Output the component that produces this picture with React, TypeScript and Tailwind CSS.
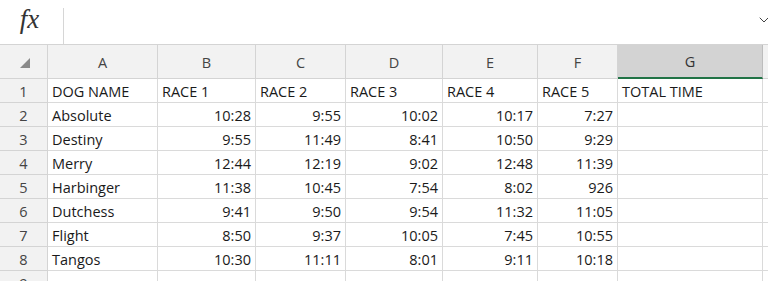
import { ChevronDown } from "lucide-react";

const cols = ["A", "B", "C", "D", "E", "F", "G"];

const rows: [string, string[]][] = [
  ["Absolute", ["10:28", "9:55", "10:02", "10:17", "7:27"]],
  ["Destiny", ["9:55", "11:49", "8:41", "10:50", "9:29"]],
  ["Merry", ["12:44", "12:19", "9:02", "12:48", "11:39"]],
  ["Harbinger", ["11:38", "10:45", "7:54", "8:02", "926"]],
  ["Dutchess", ["9:41", "9:50", "9:54", "11:32", "11:05"]],
  ["Flight", ["8:50", "9:37", "10:05", "7:45", "10:55"]],
  ["Tangos", ["10:30", "11:11", "8:01", "9:11", "10:18"]],
];

const grid =
  "grid grid-cols-[48px_110px_98px_90px_97px_95px_80px_145px_1fr]";

function Cell({ children, right }: { children?: React.ReactNode; right?: boolean }) {
  return (
    <div
      className={`h-6 border-r border-b border-[#dadada] px-1 pt-[3px] flex items-center text-[14.5px] text-[#1a1a1a] overflow-hidden whitespace-nowrap ${
        right ? "justify-end" : ""
      }`}
    >
      {children}
    </div>
  );
}

function RowHead({ n }: { n: number }) {
  return (
    <div className="h-6 border-r border-b border-[#d4d4d4] bg-[#f2f2f2] pt-[3px] flex items-center justify-center text-[14.5px] text-[#444]">
      {n}
    </div>
  );
}

export default function App() {
  return (
    <div
      className="w-[768px] h-[281px] overflow-hidden bg-white"
      style={{ fontFamily: '"Open Sans", "Liberation Sans", sans-serif' }}
    >
      {/* formula bar */}
      <div className="h-[44px] flex items-start">
        <div
          className="w-[63px] h-[38px] flex items-center justify-center text-[27px] italic text-[#333] pr-1"
          style={{ fontFamily: '"Liberation Serif", serif' }}
        >
          fx
        </div>
        <div className="mt-2 w-px h-[36px] bg-[#d6d6d6]" />
        <div className="flex-1" />
        <ChevronDown size={16} strokeWidth={1.5} className="mt-[12px] mr-[-4px] text-[#444]" />
      </div>

      {/* column headers */}
      <div className={`${grid} border-t border-[#d4d4d4]`}>
        <div className="h-[34px] border-r border-b border-[#d4d4d4] bg-[#f2f2f2] relative">
          <svg className="absolute left-[20px] top-[13px]" width="10" height="10" viewBox="0 0 10 10">
            <polygon points="10,0 10,10 0,10" fill="#8a8a8a" />
          </svg>
        </div>
        {cols.map((c) =>
          c === "G" ? (
            <div
              key={c}
              className="h-[34px] border-r border-[#bdbdbd] border-b-2 border-b-[#217346] bg-[#d3d3d3] pt-[2px] flex items-center justify-center text-[14.5px] text-[#333]"
            >
              {c}
            </div>
          ) : (
            <div
              key={c}
              className="h-[34px] border-r border-b border-[#d4d4d4] bg-[#f2f2f2] pt-[2px] flex items-center justify-center text-[14.5px] text-[#444]"
            >
              {c}
            </div>
          )
        )}
        <div className="h-[34px] border-b border-[#d4d4d4] bg-[#f2f2f2]" />
      </div>

      {/* data */}
      <div className={grid}>
        <RowHead n={1} />
        <Cell>DOG NAME</Cell>
        {["RACE 1", "RACE 2", "RACE 3", "RACE 4", "RACE 5", "TOTAL TIME"].map((h) => (
          <Cell key={h}>{h}</Cell>
        ))}
        <Cell />
        {rows.map(([name, times], i) => (
          <div key={name} className="contents">
            <RowHead n={i + 2} />
            <Cell>{name}</Cell>
            {times.map((t, j) => (
              <Cell key={j} right>
                {t}
              </Cell>
            ))}
            <Cell />
            <Cell />
          </div>
        ))}
        <RowHead n={9} />
        {Array.from({ length: 8 }).map((_, j) => (
          <Cell key={j} />
        ))}
      </div>
    </div>
  );
}
